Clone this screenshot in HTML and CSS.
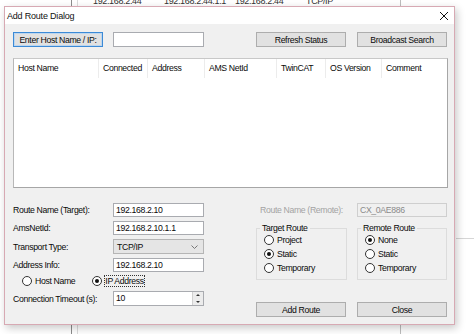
FILE: index.html
```html
<!DOCTYPE html>
<html lang="en">
<head>
    <meta charset="UTF-8">
    <title>Add Route Dialog</title>
    <link rel="stylesheet" href="styles.css">
</head>
<body>
    <!-- App behind the dialog -->
    <div class="desktop">
        <div class="bg-row">
            <span>192.168.2.44</span>
            <span>192.168.2.44.1.1</span>
            <span>192.168.2.44</span>
            <span>TCP/IP</span>
        </div>
        <div class="bg-line bg-line-a"></div>
        <div class="bg-line bg-line-b"></div>
        <div class="bg-line bg-line-c"></div>
        <div class="bg-hline"></div>

        <div class="dialog">
            <div class="titlebar">
                <span class="title">Add Route Dialog</span>
                <svg class="close" width="10" height="10" viewBox="0 0 10 10">
                    <path d="M1 1 L9 9 M9 1 L1 9" stroke="#111" stroke-width="1"/>
                </svg>
            </div>

            <div class="body">
                <!-- top row -->
                <div class="top-row">
                    <button class="btn btn-default">Enter Host Name / IP:</button>
                    <input class="field host-field" type="text">
                    <button class="btn btn-refresh">Refresh Status</button>
                    <button class="btn">Broadcast Search</button>
                </div>

                <!-- list of found hosts -->
                <div class="list">
                    <div class="list-head">
                        <span>Host Name</span>
                        <span>Connected</span>
                        <span>Address</span>
                        <span>AMS NetId</span>
                        <span>TwinCAT</span>
                        <span>OS Version</span>
                        <span>Comment</span>
                    </div>
                </div>

                <div class="bottom">
                    <div class="form-left">
                        <div class="row">
                            <label>Route Name (Target):</label>
                            <div class="field">192.168.2.10</div>
                        </div>
                        <div class="row">
                            <label>AmsNetId:</label>
                            <div class="field">192.168.2.10.1.1</div>
                        </div>
                        <div class="row row-select">
                            <label>Transport Type:</label>
                            <div class="field select">
                                <span>TCP/IP</span>
                                <svg width="7" height="4" viewBox="0 0 7 4"><path d="M0.5 0.5 L3.5 3.5 L6.5 0.5" fill="none" stroke="#777"/></svg>
                            </div>
                        </div>
                        <div class="row">
                            <label>Address Info:</label>
                            <div class="field">192.168.2.10</div>
                        </div>
                        <div class="radio-row">
                            <span class="radio-item"><span class="radio"></span>Host Name</span>
                            <span class="radio-item radio-ip"><span class="radio checked"></span><span class="focus">IP Address</span></span>
                        </div>
                        <div class="row row-spin">
                            <label>Connection Timeout (s):</label>
                            <div class="field spin">
                                <span class="spin-value">10</span>
                                <span class="spin-btns">
                                    <span class="spin-up"></span>
                                    <span class="spin-down"></span>
                                </span>
                            </div>
                        </div>
                    </div>

                    <div class="form-right">
                        <div class="row">
                            <label class="disabled">Route Name (Remote):</label>
                            <div class="field field-disabled">CX_0AE886</div>
                        </div>
                        <div class="groups">
                            <fieldset class="group">
                                <legend>Target Route</legend>
                                <span class="radio-item"><span class="radio"></span>Project</span>
                                <span class="radio-item"><span class="radio checked"></span>Static</span>
                                <span class="radio-item"><span class="radio"></span>Temporary</span>
                            </fieldset>
                            <fieldset class="group">
                                <legend>Remote Route</legend>
                                <span class="radio-item"><span class="radio checked"></span>None</span>
                                <span class="radio-item"><span class="radio"></span>Static</span>
                                <span class="radio-item"><span class="radio"></span>Temporary</span>
                            </fieldset>
                        </div>
                        <div class="actions">
                            <button class="btn">Add Route</button>
                            <button class="btn">Close</button>
                        </div>
                    </div>
                </div>
            </div>
        </div>
    </div>
</body>
</html>
```

FILE: styles.css
```css
body {
    margin: 0;
    padding: 0;
    background: #ffffff;
    font-family: 'Liberation Sans', Arial, sans-serif;
    font-size: 8.7px;
    letter-spacing: -0.35px;
    color: #0a0a0a;
    overflow: hidden;
}

.desktop {
    position: relative;
    width: 474px;
    height: 334px;
    background: #ffffff;
    overflow: hidden;
}

/* window behind the dialog */
.bg-row {
    display: flex;
    padding-left: 93px;
    margin-top: -4px;
    height: 10px;
    line-height: 10px;
    font-size: 9px;
    color: #333;
}

.bg-row span {
    width: 71px;
}

.bg-line {
    position: absolute;
    top: 0;
    bottom: 0;
    width: 1px;
}

.bg-line-a { left: 71px; background: #8c8c8c; }
.bg-line-b { left: 77px; background: #dcdcdc; }
.bg-line-c { left: 400px; background: #bdbdbd; }

.bg-hline {
    position: absolute;
    left: 456px;
    right: 0;
    top: 238px;
    height: 1px;
    background: #d6d6d6;
}

/* dialog window */
.dialog {
    position: absolute;
    left: 4px;
    top: 6px;
    width: 449px;
    height: 317px;
    border: 1px solid #d7a9b3;
    background: #f0f0f0;
    box-shadow: 2px 3px 8px rgba(0, 0, 0, 0.22);
}

.titlebar {
    display: flex;
    align-items: center;
    justify-content: space-between;
    height: 17px;
    background: #ffffff;
    padding: 0 5px 0 2px;
}

.title {
    font-size: 9px;
    letter-spacing: -0.2px;
    color: #111;
}

.body {
    padding: 8px 7px 0 8px;
}

.top-row {
    display: flex;
    align-items: center;
    height: 15px;
}

.btn {
    width: 90px;
    height: 15px;
    padding: 0;
    background: #e1e1e1;
    border: 1px solid #adadad;
    font-family: inherit;
    font-size: 8.7px;
    letter-spacing: -0.35px;
    color: #0a0a0a;
}

.btn-default {
    border-color: #3c8ad6;
    box-shadow: inset 0 0 0 1px #bcd6ef;
}

.btn-refresh {
    margin-left: 52px;
    margin-right: 11px;
}

.field {
    box-sizing: border-box;
    width: 91px;
    height: 14px;
    line-height: 12px;
    padding: 0 2px;
    background: #ffffff;
    border: 1px solid #a9abb0;
    font-family: inherit;
    font-size: 8.7px;
}

.host-field {
    margin-left: 10px;
    height: 15px;
}

/* list view */
.list {
    margin-top: 11px;
    width: 435px;
    height: 130px;
    box-sizing: border-box;
    background: #ffffff;
    border: 1px solid #a6a6a6;
    border-top-color: #c8c8c8;
    border-left-color: #b8b8b8;
}

.list-head {
    display: grid;
    grid-template-columns: 85px 49px 57px 72px 49px 56px 1fr;
    height: 19px;
}

.list-head span {
    padding-left: 4px;
    line-height: 19px;
    border-right: 1px solid #ececec;
}

.list-head span:last-child {
    border-right: none;
}

/* lower part */
.bottom {
    display: grid;
    grid-template-columns: 191px 191px;
    column-gap: 52px;
    margin-top: 15px;
}

.form-left, .form-right {
    display: flex;
    flex-direction: column;
}

.row {
    display: flex;
    align-items: center;
    margin-bottom: 4px;
}

.row label {
    width: 100px;
}

.form-right .row label {
    width: 97px;
    padding-left: 4px;
}

.form-right .field {
    width: 90px;
}

.disabled {
    color: #a3a3a3;
}

.field-disabled {
    background: #f0f0f0;
    border-color: #cfcfcf;
    color: #8a8a8a;
}

.select {
    display: flex;
    align-items: center;
    justify-content: space-between;
    height: 15px;
    padding: 0 5px 0 3px;
    background: #e5e5e5;
    border-color: #b5b5b5;
}

.radio-row {
    display: flex;
    align-items: center;
    height: 12px;
    margin: -1px 0 4px 0;
    padding-left: 9px;
}

.radio-ip {
    margin-left: 17px;
}

.radio-item {
    display: flex;
    align-items: center;
    height: 12px;
    gap: 3px;
}

.radio {
    box-sizing: border-box;
    width: 10px;
    height: 10px;
    border: 1px solid #333;
    border-radius: 50%;
    background: #ffffff;
    display: flex;
    align-items: center;
    justify-content: center;
}

.radio.checked::after {
    content: '';
    width: 4px;
    height: 4px;
    border-radius: 50%;
    background: #111;
}

.focus {
    outline: 1px dotted #333;
    outline-offset: 0;
}

.spin {
    display: flex;
    justify-content: space-between;
    height: 15px;
    padding-right: 0;
}

.spin-btns {
    display: flex;
    flex-direction: column;
    width: 10px;
    border-left: 1px solid #d0d0d0;
    background: #ececec;
}

.spin-up, .spin-down {
    flex: 1;
    display: flex;
    align-items: center;
    justify-content: center;
}

.spin-up::after {
    content: '';
    border-left: 2px solid transparent;
    border-right: 2px solid transparent;
    border-bottom: 2px solid #333;
}

.spin-down::after {
    content: '';
    border-left: 2px solid transparent;
    border-right: 2px solid transparent;
    border-top: 2px solid #333;
}

/* group boxes */
.groups {
    display: flex;
    gap: 10px;
    margin-top: 2px;
}

.group {
    box-sizing: border-box;
    width: 91px;
    height: 57px;
    margin: 0;
    padding: 0 0 0 3px;
    border: 1px solid #dcdcdc;
    display: flex;
    flex-direction: column;
    gap: 2px;
}

.group + .group {
    width: 90px;
}

.group legend {
    padding: 0 2px;
    line-height: 10px;
}

.group .radio-item {
    padding-left: 4px;
}

.group .radio-item:first-of-type {
    margin-top: 1px;
}

.actions {
    display: flex;
    gap: 11px;
    margin-top: 22px;
}
```
